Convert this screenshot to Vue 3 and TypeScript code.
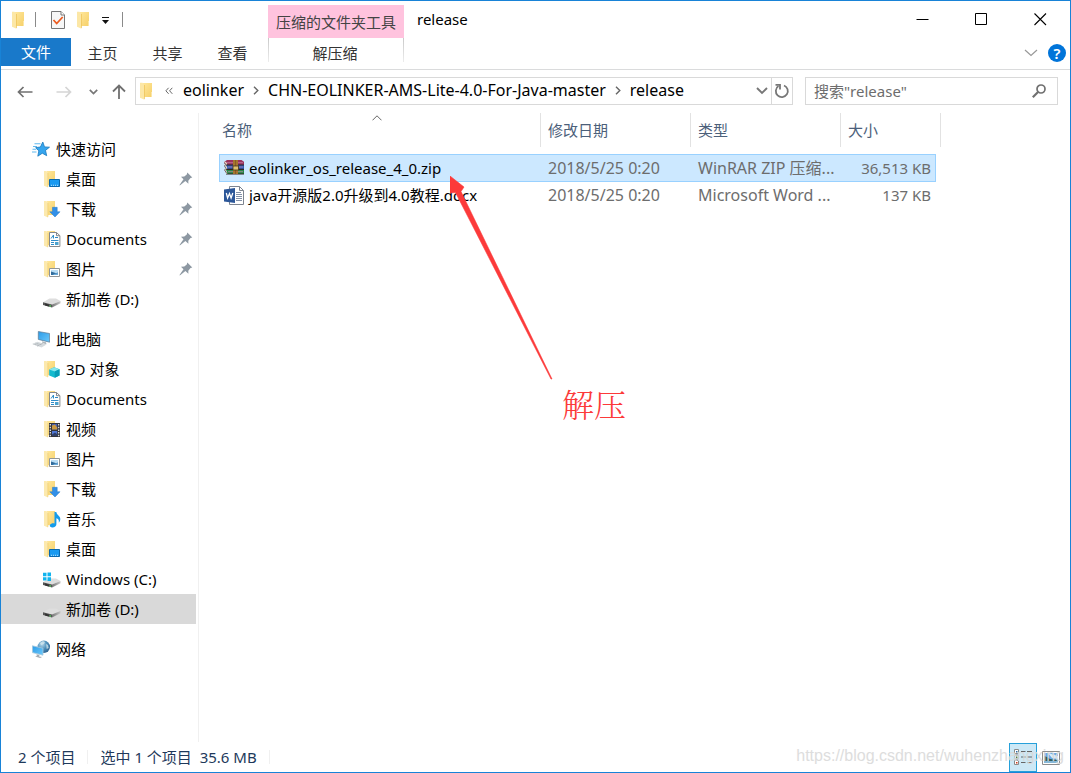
<script setup lang="ts">
import { ref } from 'vue'

interface Place {
  id: string
  label: string
  icon: string
  pinned?: boolean
}

interface Group {
  root: Place
  children: Place[]
}

interface FileRow {
  name: string
  date: string
  type: string
  size: string
  icon: string
}

const groups: Group[] = [
  {
    root: { id: 'quick', label: '快速访问', icon: 'star' },
    children: [
      { id: 'q-desktop', label: '桌面', icon: 'desktop', pinned: true },
      { id: 'q-downloads', label: '下载', icon: 'downloads', pinned: true },
      { id: 'q-documents', label: 'Documents', icon: 'documents', pinned: true },
      { id: 'q-pictures', label: '图片', icon: 'pictures', pinned: true },
      { id: 'q-d', label: '新加卷 (D:)', icon: 'drive' },
    ],
  },
  {
    root: { id: 'pc', label: '此电脑', icon: 'computer' },
    children: [
      { id: 'objects', label: '3D 对象', icon: 'objects' },
      { id: 'documents', label: 'Documents', icon: 'documents' },
      { id: 'videos', label: '视频', icon: 'videos' },
      { id: 'pictures', label: '图片', icon: 'pictures' },
      { id: 'downloads', label: '下载', icon: 'downloads' },
      { id: 'music', label: '音乐', icon: 'music' },
      { id: 'desktop', label: '桌面', icon: 'desktop' },
      { id: 'c', label: 'Windows (C:)', icon: 'windrive' },
      { id: 'd', label: '新加卷 (D:)', icon: 'drive' },
    ],
  },
  {
    root: { id: 'network', label: '网络', icon: 'network' },
    children: [],
  },
]

const files: FileRow[] = [
  {
    name: 'eolinker_os_release_4_0.zip',
    date: '2018/5/25 0:20',
    type: 'WinRAR ZIP 压缩...',
    size: '36,513 KB',
    icon: 'rar',
  },
  {
    name: 'java开源版2.0升级到4.0教程.docx',
    date: '2018/5/25 0:20',
    type: 'Microsoft Word ...',
    size: '137 KB',
    icon: 'word',
  },
]

const tabs = ['主页', '共享', '查看']
const crumbs = ['eolinker', 'CHN-EOLINKER-AMS-Lite-4.0-For-Java-master', 'release']
const currentPlace = ref('d')
const selectedFile = ref(0)
const query = ref('')
</script>

<template>
  <div class="window">
    <svg class="sprite" aria-hidden="true">
      <defs>
        <linearGradient id="g-folder" x1="0" y1="0" x2="1" y2="1">
          <stop offset="0" stop-color="#ffe79b" />
          <stop offset="1" stop-color="#f6d06a" />
        </linearGradient>
        <linearGradient id="g-screen" x1="0" y1="0" x2="1" y2="1">
          <stop offset="0" stop-color="#2b9be8" />
          <stop offset="1" stop-color="#6cc8fa" />
        </linearGradient>
        <linearGradient id="g-drive" x1="0" y1="0" x2="1" y2="0">
          <stop offset="0" stop-color="#777" />
          <stop offset="1" stop-color="#c5c5c5" />
        </linearGradient>
        <radialGradient id="g-globe" cx="0.35" cy="0.3" r="0.8">
          <stop offset="0" stop-color="#b5d8ec" />
          <stop offset="0.5" stop-color="#4e90bb" />
          <stop offset="1" stop-color="#285c8a" />
        </radialGradient>
      </defs>
      <symbol id="i-folder" viewBox="0 0 18 18">
        <path d="M4 1h9v9l-1 1v4H4z" fill="url(#g-folder)" />
        <path d="M12 11l1-1v5h-1z" fill="#fbe6a7" />
        <path d="M1 .8h2.5L5 2.4V17.6L1 15.8z" fill="#fce7a6" />
        <path d="M5 3v14.6l.8-.8V3z" fill="#efc65d" />
      </symbol>
      <symbol id="i-subfolder" viewBox="0 0 18 18">
        <path d="M4 1h8v14H4z" fill="url(#g-folder)" />
        <path d="M1 1h2.3L5 2.8V17.4L1 15.8z" fill="#fce9ae" />
        <path d="M4.6 3v14.2l.7-.7V3z" fill="#efcb6c" />
      </symbol>
      <symbol id="i-star" viewBox="0 0 18 18">
        <path d="M10.800 2l1.700 4.900 5 .3-4 3.200 1.200 5.300-4.400-2.500-4.500 3 1-5.300-3.100-3.300 4.700-.6z" fill="#35a5ee" stroke="#1979bd" stroke-width=".8" />
        <path d="M2.500 3.700h6M1 6.500h4M.5 9.300h3.800M0 12h4.500" stroke="#62b9ee" stroke-width="1.100" />
      </symbol>
      <symbol id="i-desktop" viewBox="0 0 18 18">
        <use href="#i-subfolder" width="18" height="18" />
        <path d="M6.500 9.500h10v7h-10z" fill="#1a9af1" stroke="#0b69ad" />
        <path d="M8 15.300h1M10 15.300h1M12 15.300h1M14 15.300h1" stroke="#bfe6ff" />
      </symbol>
      <symbol id="i-downloads" viewBox="0 0 18 18">
        <use href="#i-subfolder" width="18" height="18" />
        <path d="M9.500 7.300h4.700v4.500H17l-5 5.200-5.200-5.200h2.700z" fill="#3290e8" stroke="#2478c7" stroke-width=".5" />
      </symbol>
      <symbol id="i-documents" viewBox="0 0 18 18">
        <use href="#i-subfolder" width="18" height="18" />
        <path d="M6.500 2.500h7l3.400 3.200v10.800H6.500z" fill="#fff" stroke="#85898d" />
        <path d="M13.500 2.500v3.200h3.400" fill="none" stroke="#85898d" />
        <path d="M8 8.500L10.500 5v3.500M12 7.500h3M8 10.500h7.500M8 12.500h3M8 14.500h3" fill="none" stroke="#2f8cc7" />
        <path d="M12 12h3.500v3H12z" fill="#4ba2ce" />
      </symbol>
      <symbol id="i-pictures" viewBox="0 0 18 18">
        <use href="#i-subfolder" width="18" height="18" />
        <path d="M6.500 8.500h10v8h-10z" fill="#fff" stroke="#919699" />
        <path d="M8 10h7v5H8z" fill="#b9ddf4" />
        <path d="M8 11.500l3 1 2 .8 2-.8V15H8z" fill="#316c9c" />
        <path d="M11 14l4-1v2h-5z" fill="#6aaad9" />
      </symbol>
      <symbol id="i-objects" viewBox="0 0 18 18">
        <use href="#i-subfolder" width="18" height="18" />
        <path d="M6.200 9.500l5-2.200 5.300 2v6.200l-4.700 2.300-5.600-2.200z" fill="#13bace" />
        <path d="M6.200 9.500l5-2.200 5.300 2-4.800 2.100z" fill="#85e6ed" />
        <path d="M11.700 11.400l4.800-2.100v6.200l-4.700 2.300z" fill="#079eb8" />
      </symbol>
      <symbol id="i-videos" viewBox="0 0 18 18">
        <use href="#i-subfolder" width="18" height="18" />
        <path d="M6 3h11v14H6z" fill="#36363a" />
        <path d="M7.300 4v13M15.700 4v13" stroke="#eee" stroke-width="1.200" stroke-dasharray="1.500 1.200" />
        <path d="M9 4h5.200v5.500H9z" fill="#4761b8" />
        <path d="M9 5.500l3-1 2.200 3v2H9z" fill="#cb9940" />
        <path d="M9 11h5.200v5H9z" fill="#4e77d6" />
        <path d="M9 14.500l3-2 2.200 1.800V16H9z" fill="#304069" />
      </symbol>
      <symbol id="i-music" viewBox="0 0 18 18">
        <use href="#i-subfolder" width="18" height="18" />
        <path d="M11.500 2h1.800c.4 3 4 3.700 4 7 0 2-.8 2.800-1.500 3.800.5-3-.8-4-2.400-4.500v6c0 2-2 3.300-4.400 3.100-1.800-.2-2.700-1.400-2-2.600.8-1.500 3-2 4.500-1.400z" fill="#149bea" />
      </symbol>
      <symbol id="i-drive" viewBox="0 0 18 18">
        <path d="M0 12.200l6.500-3.700h6.500l4.500 2.500L9 14.500z" fill="#dedede" />
        <path d="M0 12.200l9 2.300v3L0 15z" fill="#555" />
        <path d="M9 14.500l8.500-3.500v2.200L9 17.500z" fill="url(#g-drive)" />
        <path d="M2 14l4 1.200M2 15l4 1.100" stroke="#222" stroke-width=".7" />
        <circle cx="7.200" cy="16" r=".8" fill="#50e45d" />
      </symbol>
      <symbol id="i-windrive" viewBox="0 0 18 18">
        <use href="#i-drive" width="18" height="18" />
        <path d="M0 2.800h3.500v3.400H0zM4.500 2.500H8v3.700H4.500zM0 7.200h3.500v3.400H0zM4.500 7.200H8v3.700H4.500z" fill="#11b4ee" />
      </symbol>
      <symbol id="i-computer" viewBox="0 0 18 18">
        <path d="M6.300 1.500l11.300 2v8.700L6.300 9.400z" fill="url(#g-screen)" stroke="#5d7890" stroke-width=".7" />
        <path d="M10 11.200l4 1 .5 2-4-1z" fill="#aeb5ba" />
        <path d="M0 14l5.500-2.200 9 2.600-5 3.100z" fill="#d5dadd" />
        <path d="M1.500 14.200l5 1.200M3.500 13.200l5.700 1.500M5 16.300l6-3" stroke="#999fa4" stroke-width=".6" stroke-dasharray="1 .5" />
      </symbol>
      <symbol id="i-network" viewBox="0 0 18 18">
        <circle cx="11.800" cy="6.800" r="6.200" fill="url(#g-globe)" />
        <path d="M8 3l3-2 2 1-1 2-3 1zM14 4l2 1 .7 3-2 1z" fill="#dcecf1" opacity=".7" />
        <path d="M.4 5.800l10.600 2.400v7L.4 12.600z" fill="url(#g-screen)" stroke="#a9c9dc" stroke-width=".8" />
        <path d="M4.500 14.200l3 .8-.4 1.400 3 .5-2 1-5-1.500 1.700-.4z" fill="#a5adb3" />
      </symbol>
      <symbol id="i-pin" viewBox="0 0 14 14">
        <path d="M8.300.6l5 5-1.800.5-2.200 2.700.1 2.900-3-2.800L.8 13.400.5 13l4-5.800L2 4.800l3.300-.3 2.500-2z" fill="#8d98a2" />
      </symbol>
      <symbol id="i-rar" viewBox="0 0 20 20">
        <path d="M0 4l3-2h14.500L20 3.800V7H2z" fill="#9b315c" />
        <path d="M2 6.700h18v4.500H3z" fill="#315bb8" />
        <path d="M2 11.200h18v4.900H3z" fill="#278646" />
        <path d="M2 4.700h17M4 9h15M4 13.700h15" stroke="#c58bb0" stroke-width=".7" />
        <path d="M2 7h18M2 11.400h18M2 16h18" stroke="#30251f" stroke-width="1.200" />
        <path d="M.5 3.500l2 2.300L1 7l1.800 3L1 11.800l2 3.800" fill="none" stroke="#eadfc6" stroke-width="1.100" />
        <path d="M0 4.500l1.500 2L.5 8l1.500 2.500L.5 12 2.500 15" fill="none" stroke="#4b3038" stroke-width=".7" />
        <path d="M9 2h5v14H9z" fill="#8b5c24" />
        <path d="M10 2v14M13 2v14" stroke="#d6a543" stroke-width=".7" />
        <path d="M9 8h5.500v4H9z" fill="#ddc16e" stroke="#46351c" stroke-width=".8" />
      </symbol>
      <symbol id="i-word" viewBox="0 0 20 20">
        <path d="M5.500.5h10l4 4v14h-14z" fill="#fff" stroke="#7d8490" />
        <path d="M15.500.5v4h4" fill="none" stroke="#7d8490" />
        <path d="M12 6.500h5M12 8.500h6M12 10.500h6M12 12.500h6M12 14.500h6" stroke="#8290a8" />
        <path d="M0 3.500L11 2v15L0 15.500z" fill="#2c5799" />
        <path d="M2.300 7l1.300 5 1.900-4.500 1.600 4.500L8.800 7" fill="none" stroke="#fff" stroke-width="1.300" />
      </symbol>
    </svg>

    <header class="titlebar">
      <div class="quickbar">
        <svg class="ic18"><use href="#i-folder" /></svg>
        <span class="rule"></span>
        <button class="plain check" aria-label="属性">
          <svg width="16" height="18" viewBox="0 0 16 18">
            <path d="M1.500.5h9.500l3.500 3.500v13.500h-13z" fill="#f7f7f7" stroke="#777" />
            <path d="M11 .5v3.500h3.500" fill="#fff" stroke="#777" />
            <path d="M3.500 9l3.200 3.500 6-6.500" fill="none" stroke="#eb5b20" stroke-width="1.800" />
          </svg>
        </button>
        <button class="plain newfolder" aria-label="新建文件夹">
          <svg class="ic18"><use href="#i-folder" /></svg>
        </button>
        <button class="plain more" aria-label="自定义快速访问工具栏">
          <svg width="9" height="8" viewBox="0 0 9 8"><path d="M1 1h7v1H1zM1 4h7L4.500 8z" fill="#111" /></svg>
        </button>
        <span class="rule"></span>
      </div>
      <div class="context">压缩的文件夹工具</div>
      <h1>release</h1>
      <div class="controls">
        <button class="plain" aria-label="最小化">
          <svg width="13" height="13" viewBox="0 0 13 13"><path d="M.5 6.500h12" stroke="#000" /></svg>
        </button>
        <button class="plain" aria-label="最大化">
          <svg width="13" height="13" viewBox="0 0 13 13"><path d="M.5.5h11v11H.5z" fill="none" stroke="#000" /></svg>
        </button>
        <button class="plain" aria-label="关闭">
          <svg width="13" height="13" viewBox="0 0 13 13"><path d="M.5.5l11.500 11.500M12 .5L.5 12" stroke="#000" stroke-width="1.100" /></svg>
        </button>
      </div>
    </header>

    <nav class="ribbon" aria-label="功能区">
      <button class="plain file">文件</button>
      <div class="tabs">
        <button v-for="t in tabs" :key="t" class="plain tab">{{ t }}</button>
      </div>
      <button class="plain extract">解压缩</button>
      <div class="help">
        <button class="plain" aria-label="展开功能区">
          <svg width="14" height="8" viewBox="0 0 14 8"><path d="M1 1l6 5.500L13 1" fill="none" stroke="#999" stroke-width="1.200" /></svg>
        </button>
        <button class="plain question" aria-label="帮助">?</button>
      </div>
    </nav>

    <div class="navigation">
      <div class="arrows">
        <button class="plain back" aria-label="后退">
          <svg width="16" height="12" viewBox="0 0 16 12"><path d="M15.500 6H1.500M6.500 1l-5 5 5 5" fill="none" stroke="#707070" stroke-width="1.700" /></svg>
        </button>
        <button class="plain forward" aria-label="前进">
          <svg width="16" height="12" viewBox="0 0 16 12"><path d="M.5 6h14M9.500 1l5 5-5 5" fill="none" stroke="#d5d5d5" stroke-width="1.700" /></svg>
        </button>
        <button class="plain recent" aria-label="最近的位置">
          <svg width="9" height="6" viewBox="0 0 9 6"><path d="M.8.8l3.700 3.700L8.200.8" fill="none" stroke="#777" stroke-width="1.700" /></svg>
        </button>
        <button class="plain up" aria-label="向上">
          <svg width="14" height="15" viewBox="0 0 14 15"><path d="M7 15V1.500M1 7.500l6-6 6 6" fill="none" stroke="#707070" stroke-width="1.800" /></svg>
        </button>
      </div>
      <div class="address">
        <svg class="ic18"><use href="#i-folder" /></svg>
        <svg class="laquo" width="8" height="8" viewBox="0 0 8 8"><path d="M3.600.8L.9 3.800l2.700 3M7.300.8l-2.700 3 2.700 3" fill="none" stroke="#666" /></svg>
        <template v-for="(c, i) in crumbs" :key="c">
          <svg v-if="i > 0" class="chev" width="6" height="9" viewBox="0 0 6 9"><path d="M1 .8l3.800 3.700L1 8.200" fill="none" stroke="#666" stroke-width="1.400" /></svg>
          <button class="plain crumb">{{ c }}</button>
        </template>
        <button class="plain history" aria-label="以前的位置">
          <svg width="12" height="8" viewBox="0 0 12 8"><path d="M1 1l5 5 5-5" fill="none" stroke="#777" stroke-width="1.900" /></svg>
        </button>
        <button class="plain refresh" aria-label="刷新">
          <svg width="16" height="16" viewBox="0 0 16 16"><path d="M10 2.500a6 6 0 1 1-5.500.6" fill="none" stroke="#777" stroke-width="1.800" /><path d="M1.500 1.800h4.500V6.500" fill="none" stroke="#777" stroke-width="1.800" /></svg>
        </button>
      </div>
      <label class="search">
        <input v-model="query" type="text" placeholder="搜索&quot;release&quot;" aria-label="搜索" />
        <svg width="14" height="14" viewBox="0 0 14 14"><circle cx="9" cy="5" r="4" fill="none" stroke="#707070" stroke-width="1.700" /><path d="M6 8L.8 13.200" stroke="#707070" stroke-width="2.200" /></svg>
      </label>
    </div>

    <div class="body">
      <nav class="sidebar" aria-label="导航窗格">
        <div v-for="g in groups" :key="g.root.id" class="group">
          <button class="plain place root">
            <svg class="ic18"><use :href="'#i-' + g.root.icon" /></svg>
            <span>{{ g.root.label }}</span>
          </button>
          <button
            v-for="p in g.children"
            :key="p.id"
            class="plain place"
            :class="{ current: p.id === currentPlace }"
            @click="currentPlace = p.id"
          >
            <svg class="ic18"><use :href="'#i-' + p.icon" /></svg>
            <span>{{ p.label }}</span>
            <svg v-if="p.pinned" class="pin" width="14" height="14"><use href="#i-pin" /></svg>
          </button>
        </div>
      </nav>

      <main class="content">
        <table>
          <thead>
            <tr>
              <th>
                名称
                <svg class="sort" width="10" height="6" viewBox="0 0 10 6"><path d="M.5 5.300L5 .8l4.500 4.500" fill="none" stroke="#666" /></svg>
              </th>
              <th>修改日期</th>
              <th>类型</th>
              <th>大小</th>
            </tr>
          </thead>
          <tbody>
            <tr v-for="(f, i) in files" :key="f.name" :class="{ selected: i === selectedFile }" @click="selectedFile = i">
              <td class="name">
                <svg width="20" height="20"><use :href="'#i-' + f.icon" /></svg>
                <span>{{ f.name }}</span>
              </td>
              <td>{{ f.date }}</td>
              <td>{{ f.type }}</td>
              <td class="size">{{ f.size }}</td>
            </tr>
          </tbody>
        </table>
        <div class="note">
          <svg width="104" height="206" viewBox="0 0 104 206">
            <path d="M0 0L14 11l-3 4.500L102 203l-1 0L5.500 16.500 0 17z" fill="#fc3a3a" stroke="#fc3a3a" stroke-width=".6" />
          </svg>
          <span>解压</span>
        </div>
      </main>
    </div>

    <footer class="status">
      <span class="cell count">2 个项目</span>
      <span class="cell picked">选中 1 个项目&nbsp; 35.6 MB</span>
      <div class="views">
        <button class="plain details" aria-label="详细信息">
          <svg width="18" height="17" viewBox="0 0 18 17">
            <path d="M.5.5h4v4h-4zM.5 6h4v4h-4zM.5 11.500h4v4h-4z" fill="#fff" stroke="#8a8a8a" />
            <path d="M2 2h1.500v1.500H2z" fill="#2f6ea8" />
            <path d="M2 7.500h1.500V9H2z" fill="#4a7a35" />
            <path d="M2 13h1.500v1.500H2z" fill="#d13b1c" />
            <path d="M7 2.500h4.500M13 2.500h5M7 8h4.500M13 8h5M7 13.500h4.500M13 13.500h5" stroke="#666" />
          </svg>
        </button>
        <button class="plain" aria-label="大缩略图">
          <svg width="18" height="14" viewBox="0 0 18 14">
            <path d="M.5.5h17v13H.5z" fill="#fff" stroke="#8c8c8c" />
            <path d="M2 2h14v10H2z" fill="#69a9e7" />
            <path d="M6 2l10 3v3l-6-1z" fill="#d9edfb" />
            <path d="M2 5l3 1 3 2 8 1v1H2z" fill="#315c5c" />
            <path d="M2 10h14v2H2z" fill="#87b8d7" />
          </svg>
        </button>
      </div>
      <span class="watermark">https://blog.csdn.net/wuhenzhangxing</span>
    </footer>
  </div>
</template>

<style>
body {
  margin: 0;
  background: #fff;
}
</style>

<style scoped>
.window,
.window * {
  box-sizing: border-box;
}

.window {
  position: relative;
  display: flex;
  flex-direction: column;
  min-height: 100vh;
  border: 1px solid #1883d7;
  background: #fff;
  color: #000;
  font-family: "Noto Sans", "Noto Sans CJK SC", sans-serif;
  font-size: 15px;
  line-height: 20px;
}

.sprite {
  position: absolute;
  width: 0;
  height: 0;
}

.window svg {
  display: block;
  flex: none;
}

.plain {
  display: flex;
  align-items: center;
  justify-content: center;
  margin: 0;
  padding: 0;
  border: 0;
  background: none;
  color: inherit;
  font: inherit;
  white-space: nowrap;
}

.ic18 {
  width: 18px;
  height: 18px;
}

.titlebar {
  display: flex;
  height: 37px;
}

.quickbar {
  display: flex;
  align-items: center;
  width: 267px;
  padding-left: 10px;
}

.rule {
  width: 1px;
  height: 15px;
  background: #8a8a8a;
}

.quickbar > .ic18 {
  margin-right: 6px;
}

.check {
  margin-left: 14px;
}

.newfolder {
  margin-left: 10px;
}

.more {
  margin: 0 12px 0 7px;
}

.context {
  align-self: flex-end;
  width: 136px;
  height: 33px;
  background: #ffc3de;
  color: #444;
  line-height: 34px;
  text-align: center;
}

h1 {
  margin: 0 0 0 13px;
  font-size: 15px;
  font-weight: 400;
  line-height: 36px;
}

.controls {
  display: flex;
  margin-left: auto;
}

.controls button {
  width: 59px;
  padding-bottom: 1px;
}

.ribbon {
  display: flex;
  height: 32px;
  border-bottom: 1px solid #dadbdc;
  color: #333;
}

.file {
  width: 70px;
  height: 28px;
  background: #1979ca;
  color: #fff;
}

.tabs {
  display: flex;
  width: 197px;
}

.tab {
  width: 65px;
  padding: 0 2px 2px 0;
}

.extract {
  width: 136px;
  height: 24px;
  padding: 5px 2px 0 0;
  border: 1px solid;
  border-width: 0 1px;
  border-image: linear-gradient(#c8c8c8, #eee) 1;
}

.help {
  display: flex;
  gap: 10px;
  align-items: center;
  margin-left: auto;
  padding: 0 4px 1px 0;
}

.question {
  width: 18px;
  height: 18px;
  border-radius: 50%;
  background: #0074d9;
  color: #fff;
  font-weight: 600;
}

.navigation {
  display: flex;
  align-items: center;
  height: 43px;
  padding: 0 12px 2px 0;
}

.arrows {
  display: flex;
  align-items: center;
  width: 134px;
  padding: 2px 0 0 16px;
}

.forward {
  margin-left: 23px;
}

.recent {
  margin-left: 17px;
}

.up {
  margin-left: 14px;
}

.address {
  display: flex;
  flex: 1;
  align-items: center;
  height: 28px;
  padding-left: 3px;
  border: 1px solid #d9d9d9;
}

.laquo {
  margin: 0 10px 0 8px;
}

.crumb {
  padding-bottom: 2px;
  font-size: 16px;
}

.chev {
  margin: 0 9px;
}

.history {
  width: 18px;
  margin-left: auto;
}

.refresh {
  width: 21px;
  height: 26px;
  border-left: 1px solid #d9d9d9;
}

.search {
  display: flex;
  align-items: center;
  width: 253px;
  height: 28px;
  margin-left: 12px;
  padding: 0 11px 0 8px;
  border: 1px solid #d9d9d9;
}

.search input {
  flex: 1;
  min-width: 0;
  padding: 0;
  border: 0;
  outline: 0;
  background: none;
  color: #111;
  font: inherit;
}

.search input::placeholder {
  color: #6d6d6d;
  opacity: 1;
}

.body {
  display: flex;
  flex: 1;
}

.sidebar {
  display: flex;
  flex-direction: column;
  gap: 10px;
  width: 198px;
  padding: 21px 2px 0 0;
  border-right: 1px solid #f0f0f0;
}

.place {
  justify-content: flex-start;
  gap: 5px;
  width: 100%;
  height: 30px;
  padding: 0 3px 0 42px;
}

.root {
  gap: 6px;
  padding-left: 31px;
}

.current {
  background: #d9d9d9;
}

.pin {
  margin-left: auto;
}

.content {
  position: relative;
  flex: 1;
  padding-left: 20px;
}

table,
thead,
tbody {
  display: block;
}

tr {
  display: grid;
  grid-template-columns: 322px 150px 150px 95px;
  width: 717px;
}

thead tr {
  grid-template-columns: 322px 150px 150px 100px;
  width: 722px;
  margin-bottom: 7px;
}

th {
  position: relative;
  height: 34px;
  padding: 0 7px;
  border-right: 1px solid #e2e2e2;
  color: #4c607a;
  font-weight: 400;
  line-height: 34px;
  text-align: left;
}

th:first-child {
  padding-left: 3px;
}

.sort {
  position: absolute;
  top: 2px;
  left: 153px;
}

tbody tr {
  height: 27px;
}

tbody tr.selected {
  height: 28px;
  background: #cce8ff;
  outline: 1px solid #99d1ff;
  outline-offset: -1px;
}

td {
  padding: 0 7px;
  color: #6d6d6d;
  font-size: 16px;
  line-height: 27px;
  white-space: nowrap;
}

.selected td {
  line-height: 28px;
}

.name {
  display: flex;
  gap: 5px;
  align-items: center;
  padding-left: 5px;
  color: #000;
  font-size: 15px;
}

.size {
  padding-right: 5px;
  font-size: 15px;
  text-align: right;
}

.note {
  position: absolute;
  top: 63px;
  left: 251px;
  color: #fc3a3a;
  pointer-events: none;
}

.note span {
  display: block;
  margin: 1px 0 0 112px;
  font-family: "Noto Serif CJK SC", "Noto Sans CJK SC", serif;
  font-size: 32px;
  font-weight: 300;
  line-height: 40px;
}

.status {
  position: relative;
  display: flex;
  align-items: center;
  height: 30px;
  padding-left: 17px;
  color: #1e395b;
}

.cell {
  border-right: 1px solid #f0f0f0;
  line-height: 14px;
}

.count {
  padding-right: 12px;
}

.picked {
  margin-left: 12px;
  padding-right: 12px;
}

.views {
  display: flex;
  align-self: flex-end;
  height: 29px;
  margin-left: auto;
  padding-right: 5px;
}

.views button {
  width: 28px;
}

.views .details {
  border: 1px solid #26a0da;
  background: #cce8f6;
}

.watermark {
  position: absolute;
  top: 4px;
  right: 6px;
  color: #dadada;
  font-family: "Liberation Sans", Arial, sans-serif;
  font-size: 16px;
  opacity: 0.9;
  pointer-events: none;
}
</style>
